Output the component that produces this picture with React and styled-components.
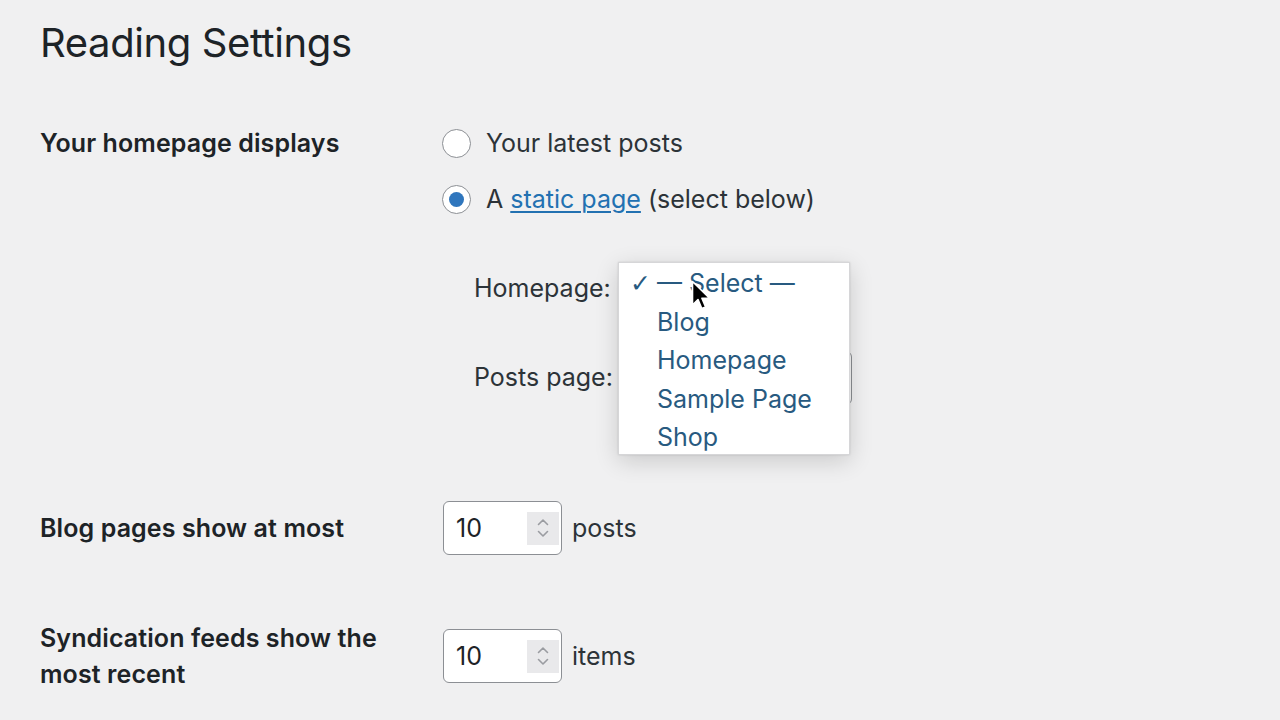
import React from 'react'
import styled, { createGlobalStyle } from 'styled-components'

const GlobalStyle = createGlobalStyle`
    html, body {
        margin: 0;
        padding: 0;
        background: #f0f0f1;
    }
    body {
        font-family: Inter, "Noto Sans", "Liberation Sans", sans-serif;
        color: #1d2327;
        width: 1280px;
        height: 720px;
        overflow: hidden;
    }
`

const App = () => {
    return (
        <Page>
            <GlobalStyle />
            <Title>Reading Settings</Title>

            <Row $top={59} $align="flex-start">
                <Label>Your homepage displays</Label>
                <Field>
                    <RadioLine>
                        <Radio />
                        <RadioText>Your latest posts</RadioText>
                    </RadioLine>
                    <RadioLine $top={26}>
                        <Radio checked />
                        <RadioText>A <Link>static page</Link> (select below)</RadioText>
                    </RadioLine>
                    <SubList>
                        <SubRow>
                            <SubLabel>Homepage:</SubLabel>
                            <SelectWrap>
                                <SelectBox />
                                <Popup>
                                    <PopupItem checked>— Select —</PopupItem>
                                    <PopupItem>Blog</PopupItem>
                                    <PopupItem>Homepage</PopupItem>
                                    <PopupItem>Sample Page</PopupItem>
                                    <PopupItem>Shop</PopupItem>
                                </Popup>
                                <Cursor />
                            </SelectWrap>
                        </SubRow>
                        <SubRow $top={35}>
                            <SubLabel>Posts page:</SubLabel>
                            <SelectWrap>
                                <SelectBox $wide />
                            </SelectWrap>
                        </SubRow>
                    </SubList>
                </Field>
            </Row>

            <Row $top={96}>
                <Label>Blog pages show at most</Label>
                <Field>
                    <NumberLine>
                        <NumberInput value="10" />
                        <Unit>posts</Unit>
                    </NumberLine>
                </Field>
            </Row>

            <Row $top={65}>
                <Label>Syndication feeds show the<br />most recent</Label>
                <Field>
                    <NumberLine>
                        <NumberInput value="10" />
                        <Unit>items</Unit>
                    </NumberLine>
                </Field>
            </Row>
        </Page>
    )
}

export default App

const Radio = ({ checked }) => (
    <RadioCircle>{checked && <RadioDot />}</RadioCircle>
)

const PopupItem = ({ checked, children }) => (
    <ItemRow>
        <Check>{checked ? '✓' : ''}</Check>
        <span>{children}</span>
    </ItemRow>
)

const NumberInput = ({ value }) => (
    <NumberBox>
        <NumberValue>{value}</NumberValue>
        <Spinner>
            <svg width="14" height="24" viewBox="0 0 14 24" fill="none" stroke="#9a9ca1" strokeWidth="1.6" strokeLinecap="round" strokeLinejoin="round">
                <path d="M2.5 8.5 L7 4 L11.5 8.5" />
                <path d="M2.5 15.5 L7 20 L11.5 15.5" />
            </svg>
        </Spinner>
    </NumberBox>
)

const Cursor = () => (
    <CursorSvg width="22" height="32" viewBox="0 0 22 32">
        <path
            d="M1.5 1.5 L1.5 25 L7 19.5 L10.8 28.5 L14.6 26.9 L10.9 18.2 L18.5 18.2 Z"
            fill="#000"
            stroke="#fff"
            strokeWidth="1.6"
            strokeLinejoin="round"
        />
    </CursorSvg>
)

const Page = styled.div`
    padding: 20px 0 0 40px;
`

const Title = styled.h1`
    margin: 0;
    font-size: 40px;
    font-weight: 400;
    line-height: 46px;
    color: #1d2327;
    letter-spacing: -0.4px;
`

const Row = styled.div`
    display: flex;
    align-items: ${props => props.$align || 'center'};
    margin-top: ${props => props.$top || 0}px;
`

const Label = styled.div`
    width: 402px;
    flex-shrink: 0;
    font-size: 25px;
    font-weight: 600;
    line-height: 36px;
    color: #1d2327;
    letter-spacing: 0.1px;
`

const Field = styled.div`
    display: flex;
    flex-direction: column;
`

const RadioLine = styled.div`
    display: flex;
    align-items: center;
    height: 30px;
    margin-top: ${props => props.$top || 0}px;
    &:first-child {
        margin-top: 3px;
    }
`

const RadioCircle = styled.span`
    box-sizing: border-box;
    width: 29px;
    height: 29px;
    border: 1.5px solid #8c8f94;
    border-radius: 50%;
    background: #fff;
    display: flex;
    align-items: center;
    justify-content: center;
    margin-right: 15px;
`

const RadioDot = styled.span`
    width: 15px;
    height: 15px;
    border-radius: 50%;
    background: #2f76bd;
`

const RadioText = styled.span`
    font-size: 25px;
    color: #2c3338;
    line-height: 30px;
`

const Link = styled.a`
    color: #2271b1;
    text-decoration: underline;
    text-underline-offset: 3px;
    text-decoration-thickness: 1.5px;
    cursor: pointer;
`

const SubList = styled.div`
    display: flex;
    flex-direction: column;
    margin-top: 48px;
    padding-left: 32px;
`

const SubRow = styled.div`
    display: flex;
    align-items: center;
    margin-top: ${props => props.$top || 0}px;
`

const SubLabel = styled.span`
    width: 145px;
    font-size: 25px;
    color: #2c3338;
    margin-top: -2px;
`

const SelectWrap = styled.div`
    position: relative;
`

const SelectBox = styled.div`
    box-sizing: border-box;
    width: ${props => props.$wide ? 233 : 231}px;
    height: 54px;
    border: 1.5px solid #8c8f94;
    border-radius: 6px;
    background: #fff;
`

const Popup = styled.div`
    position: absolute;
    left: -1px;
    top: 0;
    box-sizing: border-box;
    width: 232px;
    height: 193px;
    padding-top: 1px;
    background: #fff;
    border: 1px solid #d6d6d8;
    box-shadow: 0 6px 22px rgba(0, 0, 0, 0.16), 0 0 2px rgba(0, 0, 0, 0.12);
    z-index: 2;
`

const ItemRow = styled.div`
    display: flex;
    align-items: center;
    height: 38.5px;
    font-size: 25px;
    color: #285a80;
`

const Check = styled.span`
    width: 38px;
    padding-left: 11px;
    box-sizing: border-box;
    font-size: 25px;
    font-family: "DejaVu Sans", sans-serif;
`

const CursorSvg = styled.svg`
    position: absolute;
    left: 72px;
    top: 18px;
    z-index: 3;
`

const NumberLine = styled.div`
    display: flex;
    align-items: center;
    padding-left: 1px;
`

const NumberBox = styled.div`
    box-sizing: border-box;
    width: 119px;
    height: 54px;
    border: 1.5px solid #8c8f94;
    border-radius: 6px;
    background: #fff;
    display: flex;
    align-items: center;
    justify-content: space-between;
    padding: 0 2px 0 12px;
`

const NumberValue = styled.span`
    font-size: 25px;
    color: #1d2327;
`

const Spinner = styled.span`
    width: 32px;
    height: 33px;
    background: #e9e9eb;
    display: flex;
    align-items: center;
    justify-content: center;
`

const Unit = styled.span`
    font-size: 25px;
    color: #2c3338;
    margin-left: 10px;
`
